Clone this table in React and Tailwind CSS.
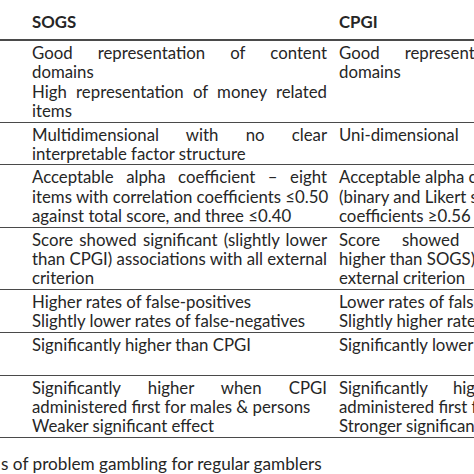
import React from "react";

// each line: [text, justified]
const rows = [
  {
    sogs: [
      ["Good representation of content", true],
      ["domains"],
      ["High representation of money related", true],
      ["items"],
    ],
    cpgi: [["Good representation of content", true], ["domains"]],
  },
  {
    sogs: [["Multidimensional with no clear", true], ["interpretable factor structure"]],
    cpgi: [["Uni-dimensional"]],
  },
  {
    sogs: [
      ["Acceptable alpha coefficient – eight", true],
      ["items with correlation coefficients ≤0.50", true],
      ["against total score, and three ≤0.40"],
    ],
    cpgi: [
      ["Acceptable alpha coefficients for both"],
      ["(binary and Likert scoring), item-total"],
      ["coefficients ≥0.56"],
    ],
  },
  {
    sogs: [
      ["Score showed significant (slightly lower", true],
      ["than CPGI) associations with all external", true],
      ["criterion"],
    ],
    cpgi: [
      ["Score showed significant (slightly", true],
      ["higher than SOGS) associations with all"],
      ["external criterion"],
    ],
  },
  {
    sogs: [["Higher rates of false-positives"], ["Slightly lower rates of false-negatives"]],
    cpgi: [["Lower rates of false-positives"], ["Slightly higher rates of false-negatives"]],
  },
  {
    sogs: [["Significantly higher than CPGI"], ["\u00a0"]],
    cpgi: [["Significantly lower than SOGS"]],
  },
  {
    sogs: [
      ["Significantly higher when CPGI", true],
      ["administered first for males & persons"],
      ["Weaker significant effect"],
    ],
    cpgi: [
      ["Significantly higher when SOGS", true],
      ["administered first for females"],
      ["Stronger significant effect"],
    ],
  },
];

function Cell({ lines }) {
  return (
    <div className="w-[295px] shrink-0">
      {lines.map(([text, justify], i) => (
        <div
          key={i}
          className={
            justify
              ? "whitespace-nowrap text-justify [text-align-last:justify]"
              : "whitespace-nowrap text-left"
          }
        >
          {text}
        </div>
      ))}
    </div>
  );
}

export default function App() {
  return (
    <div
      className="w-[474px] h-[474px] overflow-hidden bg-white text-[#262626] text-[16.8px] leading-[19.4px]"
      style={{ fontFamily: "Lato, 'Open Sans', sans-serif" }}
    >
      <div className="w-[700px]">
        <div className="h-[41px] border-b-2 border-[#4a4a4a] pt-[12px] pl-[32px] flex gap-[12px] font-bold">
          <div className="w-[295px] shrink-0">SOGS</div>
          <div className="w-[295px] shrink-0">CPGI</div>
        </div>
        {rows.map((row, i) => (
          <div
            key={i}
            className="flex gap-[12px] pl-[32px] pt-[2px] pb-[1px] border-b-[1.5px] border-[#4a4a4a]"
          >
            <Cell lines={row.sogs} />
            <Cell lines={row.cpgi} />
          </div>
        ))}
        <p className="mt-[16px] pl-[1px] whitespace-nowrap text-[17.2px]">
          s of problem gambling for regular gamblers
        </p>
      </div>
    </div>
  );
}
